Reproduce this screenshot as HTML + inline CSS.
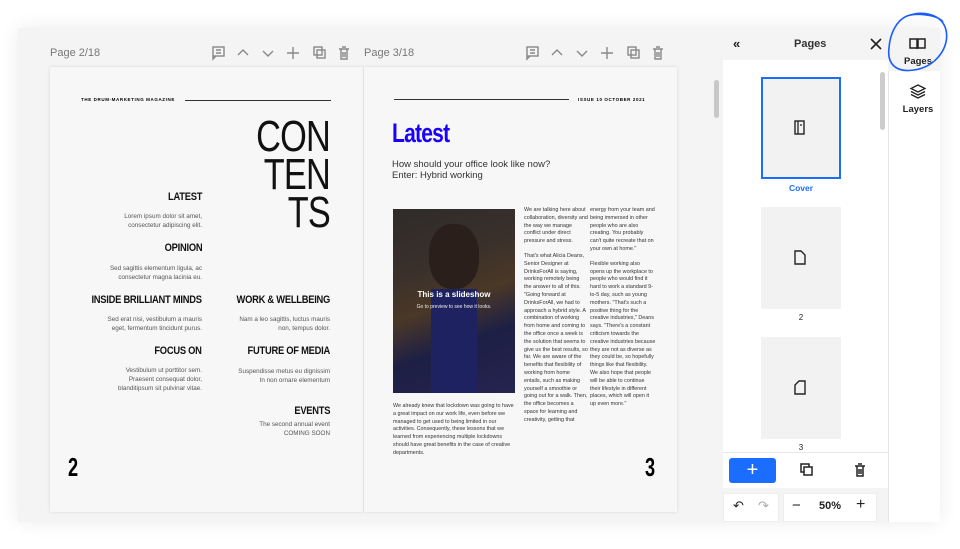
<!DOCTYPE html>
<html><head><meta charset="utf-8"><style>
*{margin:0;padding:0;box-sizing:border-box}
body{width:960px;height:549px;background:#fff;font-family:"Liberation Sans",sans-serif;position:relative;overflow:hidden}
.abs{position:absolute}
.app{left:18px;top:28px;width:922px;height:494px;background:#f4f4f4;box-shadow:0 0 18px rgba(0,0,0,.08)}
.lbl{font-size:11px;color:#777;top:47px}
.page{top:67px;height:445px;background:#f7f7f7;box-shadow:0 0 3px rgba(0,0,0,.12)}
.h{font-family:"Liberation Sans Narrow","Liberation Sans",sans-serif;font-weight:bold;font-size:11px;color:#111;text-align:right;letter-spacing:-.3px;transform:scaleX(.85);transform-origin:right}
.t{font-size:6.3px;color:#555;text-align:right;line-height:9px}
.col{font-size:5.4px;line-height:7.8px;color:#333}
.ic{stroke:#888;fill:none;stroke-width:1.4}
</style></head><body>
<div class="abs app"></div>
<div class="abs lbl" style="left:50px">Page 2/18</div>
<div class="abs lbl" style="left:364px">Page 3/18</div>
<svg class="abs" style="left:208px;top:44px" width="150" height="18" viewBox="0 0 150 18">
<g class="ic"><rect x="5" y="3" width="11" height="9"/><path d="M5 12v3l3-3M8 6h5M8 9h5"/><path d="M30 11l5-5 5 5"/><path d="M55 7l5 5 5-5"/><path d="M85 3v12M79 9h12"/><rect x="106" y="3" width="8" height="8"/><rect x="109" y="6" width="8" height="8"/><path d="M131 5h10M133 5v10h6V5M134 3h4M135 8v5M137 8v5"/></g></svg>
<svg class="abs" style="left:522px;top:44px" width="150" height="18" viewBox="0 0 150 18">
<g class="ic"><rect x="5" y="3" width="11" height="9"/><path d="M5 12v3l3-3M8 6h5M8 9h5"/><path d="M30 11l5-5 5 5"/><path d="M55 7l5 5 5-5"/><path d="M85 3v12M79 9h12"/><rect x="106" y="3" width="8" height="8"/><rect x="109" y="6" width="8" height="8"/><path d="M131 5h10M133 5v10h6V5M134 3h4M135 8v5M137 8v5"/></g></svg>

<div class="abs page" style="left:50px;width:313px"></div>
<div class="abs page" style="left:364px;width:313px"></div>
<div class="abs" style="left:363px;top:67px;width:1px;height:445px;background:#e2e2e2"></div>

<div class="abs" style="left:81px;top:97px;font-size:4.5px;font-weight:bold;letter-spacing:.6px">THE DRUM-MARKETING MAGAZINE</div>
<div class="abs" style="left:185px;top:100px;width:146px;height:1px;background:#333"></div>
<div class="abs" style="left:232px;top:118px;font-size:44px;line-height:38px;font-weight:normal;color:#111;text-align:right;width:98px;letter-spacing:-1px;transform:scaleX(.78);transform-origin:right">CON<br>TEN<br>TS</div>

<div class="abs h" style="right:758px;top:191px">LATEST</div>
<div class="abs t" style="right:758px;top:212px">Lorem ipsum dolor sit amet,<br>consectetur adipiscing elit.</div>
<div class="abs h" style="right:758px;top:242px">OPINION</div>
<div class="abs t" style="right:758px;top:264px">Sed sagittis elementum ligula, ac<br>consectetur magna lacinia eu.</div>
<div class="abs h" style="right:758px;top:294px">INSIDE BRILLIANT MINDS</div>
<div class="abs t" style="right:758px;top:315px">Sed erat nisi, vestibulum a mauris<br>eget, fermentum tincidunt purus.</div>
<div class="abs h" style="right:758px;top:345px">FOCUS ON</div>
<div class="abs t" style="right:758px;top:366px">Vestibulum ut porttitor sem.<br>Praesent consequat dolor,<br>blanditipsum sit pulvinar vitae.</div>
<div class="abs h" style="right:630px;top:294px">WORK &amp; WELLBEING</div>
<div class="abs t" style="right:630px;top:315px">Nam a leo sagittis, luctus mauris<br>non, tempus dolor.</div>
<div class="abs h" style="right:630px;top:345px">FUTURE OF MEDIA</div>
<div class="abs t" style="right:630px;top:367px">Suspendisse metus eu dignissim<br>In non ornare elementum</div>
<div class="abs h" style="right:630px;top:405px">EVENTS</div>
<div class="abs t" style="right:630px;top:420px">The second annual event<br>COMING SOON</div>
<div class="abs" style="left:68px;top:452px;font-size:26px;font-weight:bold;transform:scaleX(.7);transform-origin:left">2</div>

<div class="abs" style="left:394px;top:99px;width:175px;height:1px;background:#333"></div>
<div class="abs" style="left:578px;top:97px;font-size:4.5px;font-weight:bold;letter-spacing:.6px">ISSUE 10 OCTOBER 2021</div>
<div class="abs" style="left:392px;top:118px;font-size:27px;font-weight:bold;color:#1a00ff;transform:scaleX(.78);transform-origin:left;letter-spacing:-1px">Latest</div>
<div class="abs" style="left:392px;top:160px;font-size:9.5px;line-height:10.5px;color:#333">How should your office look like now?<br>Enter: Hybrid working</div>
<div class="abs" style="left:393px;top:209px;width:122px;height:184px;overflow:hidden;background:linear-gradient(160deg,#2e2b2a 0%,#3a302b 30%,#4a3826 50%,#1d1f45 70%,#252450 100%)">
<div class="abs" style="left:36px;top:15px;width:50px;height:65px;border-radius:45%;background:#2a1f1a"></div>
<div class="abs" style="left:38px;top:80px;width:46px;height:110px;background:#1f2260"></div>
<div class="abs" style="left:0;top:81px;width:122px;text-align:center;color:#fff;font-size:8px;font-weight:bold">This is a slideshow</div>
<div class="abs" style="left:0;top:95px;width:122px;text-align:center;color:#eee;font-size:5px">Go to preview to see how it looks.</div></div>
<div class="abs col" style="left:393px;top:403px;width:124px">We already knew that lockdown was going to have a great impact on our work life, even before we managed to get used to being limited in our activities. Consequently, these lessons that we learned from experiencing multiple lockdowns should have great benefits in the case of creative departments.</div>
<div class="abs col" style="left:524px;top:207px;width:64px">We are talking here about collaboration, diversity and the way we manage conflict under direct pressure and stress.<br><span style="display:block;height:7px"></span>That's what Alicia Deans, Senior Designer at DrinksForAll is saying, working remotely being the answer to all of this. "Going forward at DrinksForAll, we had to approach a hybrid style. A combination of working from home and coming to the office once a week is the solution that seems to give us the best results, so far. We are aware of the benefits that flexibility of working from home entails, such as making yourself a smoothie or going out for a walk. Then, the office becomes a space for learning and creativity, getting that</div>
<div class="abs col" style="left:590px;top:207px;width:66px">energy from your team and being immersed in other people who are also creating. You probably can't quite recreate that on your own at home."<br><span style="display:block;height:7px"></span>Flexible working also opens up the workplace to people who would find it hard to work a standard 9-to-5 day, such as young mothers. "That's such a positive thing for the creative industries," Deans says. "There's a constant criticism towards the creative industries because they are not as diverse as they could be, so hopefully things like that flexibility. We also hope that people will be able to continue their lifestyle in different places, which will open it up even more."</div>
<div class="abs" style="left:645px;top:452px;font-size:26px;font-weight:bold;transform:scaleX(.7);transform-origin:left">3</div>

<div class="abs" style="left:714px;top:80px;width:5px;height:38px;border-radius:3px;background:#c8c8c8"></div>

<!-- panel -->
<div class="abs" style="left:723px;top:28px;width:165px;height:494px;background:#f4f4f4"></div>
<div class="abs" style="left:723px;top:60px;width:165px;height:392px;background:#fff"></div>
<div class="abs" style="left:733px;top:36px;font-size:13px;color:#222;font-weight:bold">«</div>
<div class="abs" style="left:794px;top:38px;font-size:11px;color:#333;font-weight:bold">Pages</div>
<svg class="abs" style="left:869px;top:37px" width="14" height="14"><path d="M2 2l10 10M12 2L2 12" stroke="#222" stroke-width="1.6"/></svg>
<div class="abs" style="left:880px;top:72px;width:5px;height:58px;border-radius:3px;background:#ccc"></div>
<div class="abs" style="left:761px;top:77px;width:80px;height:102px;background:#f2f2f2;border:2px solid #1a6dff"></div>
<svg class="abs" style="left:793px;top:120px" width="14" height="16"><rect x="2" y="1" width="9" height="13" fill="none" stroke="#222" stroke-width="1.4"/><path d="M5 1v13M7 5h2" stroke="#222" stroke-width="1.3"/></svg>
<div class="abs" style="left:761px;top:183px;width:80px;text-align:center;font-size:8.5px;color:#1a6dff;font-weight:bold">Cover</div>
<div class="abs" style="left:761px;top:207px;width:80px;height:102px;background:#f2f2f2"></div>
<svg class="abs" style="left:793px;top:250px" width="14" height="16"><path d="M2 1h6l4 4v9H2z" fill="none" stroke="#222" stroke-width="1.4"/></svg>
<div class="abs" style="left:761px;top:313px;width:80px;text-align:center;font-size:8px;color:#222">2</div>
<div class="abs" style="left:761px;top:337px;width:80px;height:102px;background:#f2f2f2"></div>
<svg class="abs" style="left:793px;top:380px" width="14" height="16"><path d="M2 5l4-4h6v13H2z" fill="none" stroke="#222" stroke-width="1.4"/></svg>
<div class="abs" style="left:761px;top:443px;width:80px;text-align:center;font-size:8px;color:#222">3</div>
<div class="abs" style="left:723px;top:452px;width:165px;height:36px;background:#fff;border-top:1px solid #e8e8e8"></div>
<div class="abs" style="left:729px;top:458px;width:47px;height:25px;background:#1a6dff;border-radius:3px;color:#fff;font-size:20px;line-height:24px;text-align:center">+</div>
<svg class="abs" style="left:799px;top:462px" width="16" height="16"><rect x="2" y="2" width="8" height="8" fill="#fff" stroke="#222" stroke-width="1.5"/><rect x="5" y="5" width="8" height="8" fill="#fff" stroke="#222" stroke-width="1.5"/></svg>
<svg class="abs" style="left:852px;top:462px" width="16" height="16"><path d="M3 4h10M5 4v10h6V4M6 2h4M7 7v5M9 7v5" fill="none" stroke="#222" stroke-width="1.5"/></svg>
<div class="abs" style="left:723px;top:493px;width:56px;height:29px;background:#fff;border:1px solid #eee"></div>
<div class="abs" style="left:783px;top:493px;width:94px;height:29px;background:#fff;border:1px solid #eee"></div>
<div class="abs" style="left:733px;top:498px;font-size:13px;color:#222">↶</div>
<div class="abs" style="left:758px;top:498px;font-size:13px;color:#aaa">↷</div>
<div class="abs" style="left:792px;top:497px;font-size:15px;color:#222">−</div>
<div class="abs" style="left:819px;top:500px;font-size:11px;color:#222;font-weight:bold">50%</div>
<div class="abs" style="left:856px;top:496px;font-size:16px;color:#222">+</div>

<!-- rail -->
<div class="abs" style="left:888px;top:28px;width:52px;height:494px;background:#fff;border-left:1px solid #e6e6e6"></div>
<div class="abs" style="left:888px;top:28px;width:52px;height:43px;background:#f4f4f4"></div>
<svg class="abs" style="left:909px;top:37px" width="18" height="14"><path d="M1 2h7v9H1zM9 2h7v9H9zM8 11v1" fill="none" stroke="#222" stroke-width="1.5"/></svg>
<div class="abs" style="left:888px;top:56px;width:60px;text-align:center;font-size:9.5px;color:#222;font-weight:bold">Pages</div>
<svg class="abs" style="left:909px;top:83px" width="18" height="16"><path d="M9 2l7 3.5-7 3.5-7-3.5zM2 8.5l7 3.5 7-3.5M2 11.5l7 3.5 7-3.5" fill="none" stroke="#222" stroke-width="1.3"/></svg>
<div class="abs" style="left:888px;top:104px;width:60px;text-align:center;font-size:9.5px;color:#222;font-weight:bold">Layers</div>
<svg class="abs" style="left:885px;top:8px" width="70" height="70"><path d="M22 8C38 2 57 6 61 22c4 17-10 37-32 40C10 65 2 55 4 40 5 25 12 12 22 8c12-4 32 0 36 6" fill="none" stroke="#1a5cff" stroke-width="1.6"/></svg>
</body></html>
